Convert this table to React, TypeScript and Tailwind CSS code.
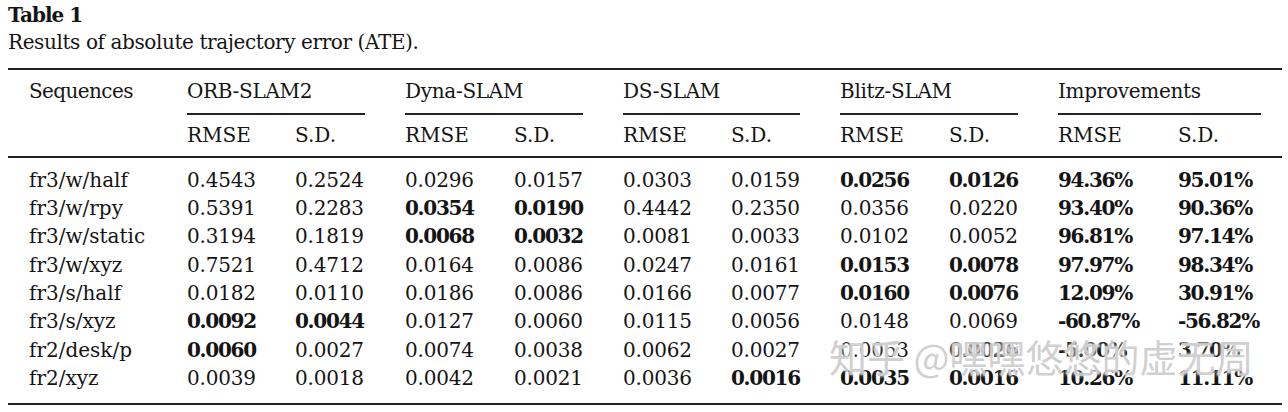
const cols =
  'grid grid-cols-[179px_108px_110px_109px_109px_108px_109px_109px_109px_120px_104px]';

type Cell = [string, boolean];

const groups = [
  { name: 'ORB-SLAM2', mr: 'mr-[40px]' },
  { name: 'Dyna-SLAM', mr: 'mr-[40px]' },
  { name: 'DS-SLAM', mr: 'mr-[40px]' },
  { name: 'Blitz-SLAM', mr: 'mr-[40px]' },
  { name: 'Improvements', mr: 'mr-[21px]' },
];

// b = bold
const b = (v: string): Cell => [v, true];
const n = (v: string): Cell => [v, false];

const rows: { seq: string; cells: Cell[] }[] = [
  {
    seq: 'fr3/w/half',
    cells: [n('0.4543'), n('0.2524'), n('0.0296'), n('0.0157'), n('0.0303'), n('0.0159'), b('0.0256'), b('0.0126'), b('94.36%'), b('95.01%')],
  },
  {
    seq: 'fr3/w/rpy',
    cells: [n('0.5391'), n('0.2283'), b('0.0354'), b('0.0190'), n('0.4442'), n('0.2350'), n('0.0356'), n('0.0220'), b('93.40%'), b('90.36%')],
  },
  {
    seq: 'fr3/w/static',
    cells: [n('0.3194'), n('0.1819'), b('0.0068'), b('0.0032'), n('0.0081'), n('0.0033'), n('0.0102'), n('0.0052'), b('96.81%'), b('97.14%')],
  },
  {
    seq: 'fr3/w/xyz',
    cells: [n('0.7521'), n('0.4712'), n('0.0164'), n('0.0086'), n('0.0247'), n('0.0161'), b('0.0153'), b('0.0078'), b('97.97%'), b('98.34%')],
  },
  {
    seq: 'fr3/s/half',
    cells: [n('0.0182'), n('0.0110'), n('0.0186'), n('0.0086'), n('0.0166'), n('0.0077'), b('0.0160'), b('0.0076'), b('12.09%'), b('30.91%')],
  },
  {
    seq: 'fr3/s/xyz',
    cells: [b('0.0092'), b('0.0044'), n('0.0127'), n('0.0060'), n('0.0115'), n('0.0056'), n('0.0148'), n('0.0069'), b('-60.87%'), b('-56.82%')],
  },
  {
    seq: 'fr2/desk/p',
    cells: [b('0.0060'), n('0.0027'), n('0.0074'), n('0.0038'), n('0.0062'), n('0.0027'), n('0.0063'), b('0.0026'), b('-5.00%'), b('3.70%')],
  },
  {
    seq: 'fr2/xyz',
    cells: [n('0.0039'), n('0.0018'), n('0.0042'), n('0.0021'), n('0.0036'), b('0.0016'), b('0.0035'), b('0.0016'), b('10.26%'), b('11.11%')],
  },
];

export default function App() {
  return (
    <div className="relative w-[1288px] h-[412px] overflow-hidden bg-white text-[#141414] font-['DejaVu_Serif',serif]">
      {/* Caption */}
      <div className="pl-[8px] pt-[2px] text-[20px] leading-[27px] tracking-[-0.4px]">
        <div className="font-bold tracking-[-1px]">Table 1</div>
        <div>Results of absolute trajectory error (ATE).</div>
      </div>

      {/* Table */}
      <div className="ml-[8px] mt-[12px] w-[1274px] text-[20px]">
        <div className="h-[2px] bg-[#222]" />

        {/* group header */}
        <div className={`${cols} pt-[7px] leading-[28px]`}>
          <div className="pl-[21px] tracking-[-0.6px]">Sequences</div>
          {groups.map((g) => (
            <div key={g.name} className="col-span-2">
              <div className="tracking-[-0.3px]">{g.name}</div>
              <div className={`mt-[8px] h-[1.5px] bg-[#222] ${g.mr}`} />
            </div>
          ))}
        </div>

        {/* sub header */}
        <div className={`${cols} mt-[6px] leading-[28px]`}>
          <div />
          {groups.map((g) => (
            <div key={g.name} className="col-span-2 grid grid-cols-subgrid">
              <div>RMSE</div>
              <div>S.D.</div>
            </div>
          ))}
        </div>

        <div className="mt-[7px] h-[2px] bg-[#222]" />

        {/* data */}
        <div className="pt-[8px] pb-[10px]">
          {rows.map((r) => (
            <div key={r.seq} className={`${cols} h-[28.4px] leading-[28.4px]`}>
              <div className="pl-[21px]">{r.seq}</div>
              {r.cells.map(([v, bold], i) => (
                <div key={i} className={bold ? 'font-bold tracking-[-1.3px]' : 'tracking-[-0.2px]'}>
                  {v}
                </div>
              ))}
            </div>
          ))}
        </div>

        <div className="h-[2px] bg-[#222]" />
      </div>

      {/* watermark */}
      <div className="absolute left-[829px] top-[334px] text-[38px] leading-[44px] whitespace-nowrap text-[#c4c4c4]/80 font-['Noto_Sans_CJK_SC',sans-serif] [text-shadow:0_0_2px_rgba(255,255,255,0.95),0_0_4px_rgba(255,255,255,0.8)]">
        知乎 @嘿嘿悠悠的虚无周
      </div>
    </div>
  );
}
